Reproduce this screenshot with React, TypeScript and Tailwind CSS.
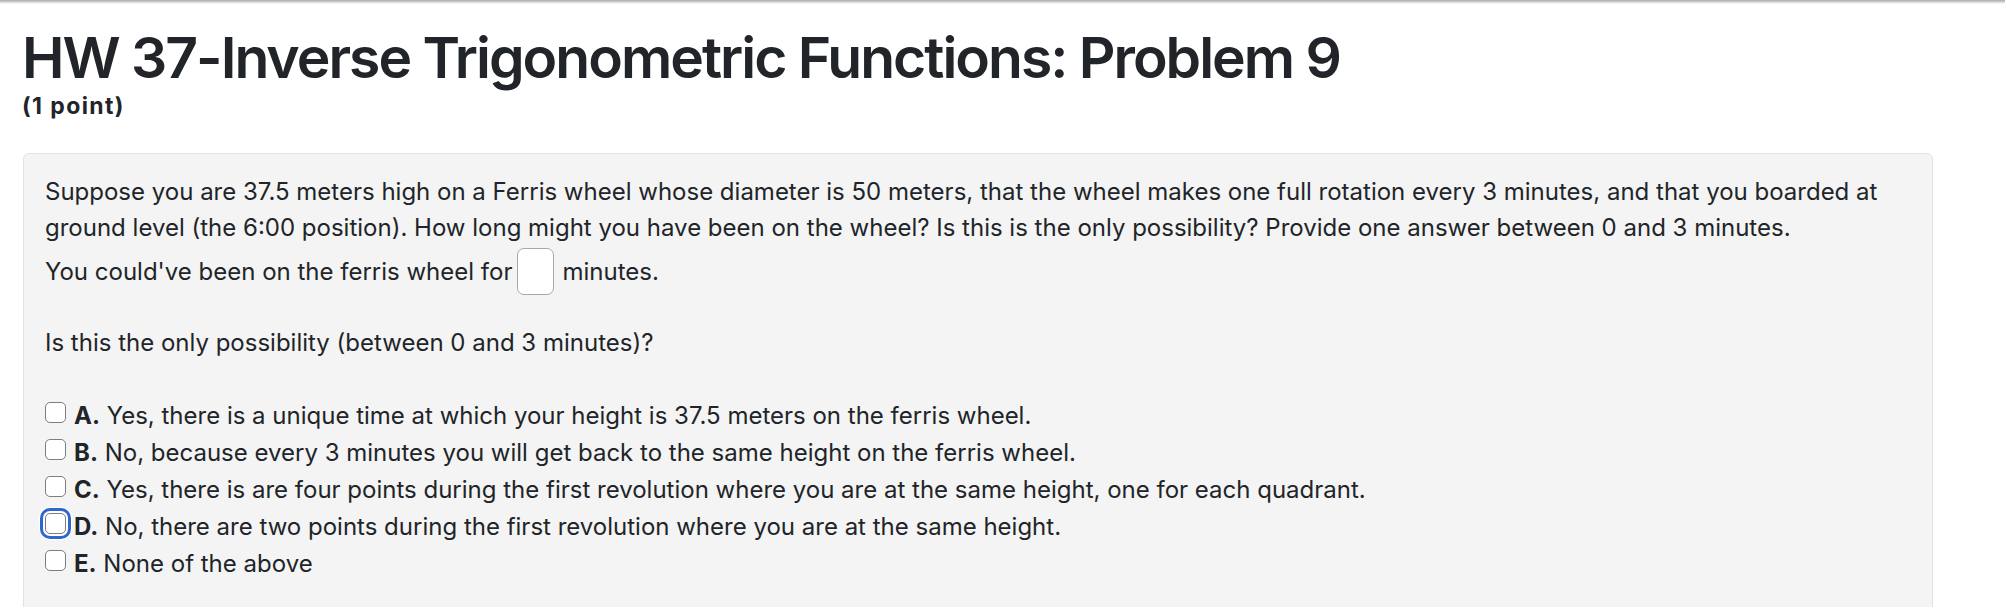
import { useState } from 'react'

const options = [
    { key: 'A', text: 'Yes, there is a unique time at which your height is 37.5 meters on the ferris wheel.' },
    { key: 'B', text: 'No, because every 3 minutes you will get back to the same height on the ferris wheel.' },
    { key: 'C', text: 'Yes, there is are four points during the first revolution where you are at the same height, one for each quadrant.' },
    { key: 'D', text: 'No, there are two points during the first revolution where you are at the same height.' },
    { key: 'E', text: 'None of the above' },
]

export default function App() {
    const [checked, setChecked] = useState<Record<string, boolean>>({})
    const [answer, setAnswer] = useState('')

    return (
        <div className="min-h-screen bg-white text-[#212529]" style={{ fontFamily: 'Inter, "Noto Sans", sans-serif' }}>
            {/* top shadow edge */}
            <div className="h-[4px] bg-gradient-to-b from-[#a8a8a8] via-[#d6d6d6] to-white" />

            <div className="pl-[22px] w-[1933px]">
                {/* Header */}
                <h1 className="mt-[18px] text-[57px] leading-[72px] font-semibold tracking-[-2px]">
                    HW 37-Inverse Trigonometric Functions: Problem 9
                </h1>
                <p className="text-[23px] leading-[25px] font-bold tracking-[1.4px]">(1 point)</p>

                {/* Problem body */}
                <div className="mt-[34px] ml-px rounded-[6px] border border-[#e2e2e2] bg-[#f4f4f4] pl-[21px] pr-6 pt-[20px] pb-16 text-[24px] leading-[36px]">
                    <p>
                        Suppose you are 37.5 meters high on a Ferris wheel whose diameter is 50 meters, that the wheel makes one full rotation every 3 minutes, and that you boarded at ground level (the 6:00 position). How long might you have been on the wheel? Is this is the only possibility? Provide one answer between 0 and 3 minutes.
                    </p>
                    <div className="mt-[2px] flex h-[47px] items-center">
                        <span>You could've been on the ferris wheel for</span>
                        <input
                            value={answer}
                            onChange={e => setAnswer(e.target.value)}
                            className="ml-[5px] mr-[8px] h-[47px] w-[37px] rounded-[7px] border border-[#a8a8a8] bg-white px-1 outline-none"
                        />
                        <span>minutes.</span>
                    </div>

                    <p className="mt-[30px]">Is this the only possibility (between 0 and 3 minutes)?</p>

                    <div className="mt-[36px] flex flex-col">
                        {options.map(o => (
                            <label key={o.key} className="flex h-[37px] items-center">
                                <input
                                    type="checkbox"
                                    checked={!!checked[o.key]}
                                    onChange={() => setChecked(c => ({ ...c, [o.key]: !c[o.key] }))}
                                    className={
                                        o.key === 'D'
                                            ? 'mb-[6px] mr-[8px] h-[21px] w-[21px] shrink-0 appearance-none rounded-[5px] border-[1.5px] border-[#7d7d7d] bg-white outline-[3px] outline-offset-[2px] outline-solid outline-[#2f67cf] shadow-[0_0_0_6px_#ffffff]'
                                            : 'mb-[6px] mr-[8px] h-[21px] w-[21px] shrink-0 appearance-none rounded-[5px] border-[1.5px] border-[#7d7d7d] bg-white'
                                    }
                                />
                                <span>
                                    <b className="font-bold">{o.key}.</b> {o.text}
                                </span>
                            </label>
                        ))}
                    </div>
                </div>
            </div>
        </div>
    )
}
